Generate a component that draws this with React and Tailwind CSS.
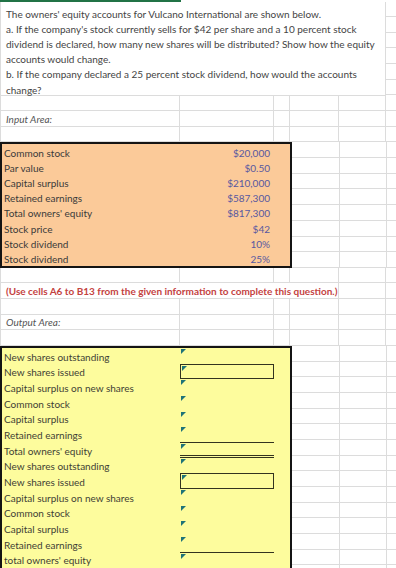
import React from 'react';

const inputs = [
  ['Common stock', '$20,000'],
  ['Par value', '$0.50'],
  ['Capital surplus', '$210,000'],
  ['Retained earnings', '$587,300'],
  ["Total owners' equity", '$817,300'],
  ['Stock price', '$42'],
  ['Stock dividend', '10%'],
  ['Stock dividend', '25%'],
];

// mark: box = boxed answer cell, top = single rule above, total = rule above + double rule below
const outputs = [
  ['New shares outstanding', ''],
  ['New shares issued', 'box'],
  ['Capital surplus on new shares', ''],
  ['Common stock', ''],
  ['Capital surplus', ''],
  ['Retained earnings', ''],
  ["Total owners' equity", 'total'],
  ['New shares outstanding', ''],
  ['New shares issued', 'box'],
  ['Capital surplus on new shares', ''],
  ['Common stock', ''],
  ['Capital surplus', ''],
  ['Retained earnings', ''],
  ["total owners' equity", 'top'],
  ['', 'none'],
];

const intro = [
  "The owners' equity accounts for Vulcano International are shown below.",
  "a. If the company's stock currently sells for $42 per share and a 10 percent stock",
  'dividend is declared, how many new shares will be distributed? Show how the equity',
  'accounts would change.',
  'b. If the company declared a 25 percent stock dividend, how would the accounts',
  'change?',
];

function RightCells({ wide = false }) {
  return (
    <>
      <div className={`${wide ? 'w-[49px]' : 'w-[48px]'} shrink-0 border-r border-b border-[#dcdcdc]`} />
      <div className="w-[47px] shrink-0 border-r border-b border-[#dcdcdc]" />
      <div className="flex-1 border-b border-[#dcdcdc]" />
    </>
  );
}

function GridRow({ children, italic = false }) {
  return (
    <div className="flex h-[15.67px]">
      <div
        className={`w-[180px] shrink-0 border-l border-r border-b border-[#dcdcdc] flex items-end pl-[5px] pb-[1px] leading-[12px] text-[#555] ${
          italic ? 'italic' : ''
        }`}
      >
        {children}
      </div>
      <div className="w-[94px] shrink-0 border-r border-b border-[#dcdcdc]" />
      <div className="w-[16px] shrink-0 border-r border-b border-[#dcdcdc]" />
      <RightCells wide />
    </div>
  );
}

function Flag() {
  return (
    <span className="absolute top-[1px] left-[1px] w-0 h-0 border-t-[5px] border-r-[5px] border-t-[#1e7378] border-r-transparent" />
  );
}

export default function App() {
  return (
    <div className="w-[396px] h-[568px] overflow-hidden bg-white font-['Lato',sans-serif] text-[10px]">
      <div className="flex h-[1.5px]">
        <div className="w-[181px] bg-[#217346]" />
      </div>

      <div className="flex h-[94px]">
        <div className="w-[386px] shrink-0 border-l border-r border-b border-[#dcdcdc] pl-[5px] pt-[5px] leading-[15.2px] text-[#444]">
          {intro.map((line, i) => (
            <div key={i} className="whitespace-nowrap">
              {line}
            </div>
          ))}
        </div>
        <div className="flex-1 flex flex-col">
          {[0, 1, 2, 3, 4, 5].map((i) => (
            <div key={i} className="h-[15.67px] border-b border-[#dcdcdc]" />
          ))}
        </div>
      </div>

      <GridRow />
      <GridRow italic>Input Area:</GridRow>
      <GridRow />

      <div className="flex h-[125.36px]">
        <div className="w-[292px] shrink-0 border-2 border-[#141414] bg-[#fbca99] flex flex-col">
          {inputs.map(([label, value], i) => (
            <div key={i} className="flex-1 flex items-end pb-[1px] leading-[12px]">
              <div className="w-[178px] shrink-0 pl-[2px] text-[#3a3a3a] whitespace-nowrap">{label}</div>
              <div className="w-[94px] shrink-0 pr-[4px] text-right text-[#5858a0]">{value}</div>
            </div>
          ))}
        </div>
        <div className="flex-1 flex flex-col">
          {inputs.map((_, i) => (
            <div key={i} className="flex-1 flex">
              <RightCells />
            </div>
          ))}
        </div>
      </div>

      <GridRow />
      <div className="flex h-[15.67px]">
        <div className="w-[339px] shrink-0 border-l border-r border-b border-[#dcdcdc] flex items-end pl-[5px] pb-[1px] leading-[12px] font-bold text-[#c4423f] whitespace-nowrap">
          (Use cells A6 to B13 from the given information to complete this question.)
        </div>
        <div className="w-[47px] shrink-0 border-r border-b border-[#dcdcdc]" />
        <div className="flex-1 border-b border-[#dcdcdc]" />
      </div>
      <GridRow />
      <GridRow italic>Output Area:</GridRow>
      <GridRow />

      <div className="flex">
        <div className="w-[292px] shrink-0 border-t-2 border-l-2 border-r-2 border-[#141414] bg-[#fdfc9d] flex flex-col">
          {outputs.map(([label, mark], i) => (
            <div key={i} className="h-[15.67px] flex">
              <div className="w-[178px] shrink-0 flex items-end pl-[2px] pb-[1px] leading-[12px] text-[#3f3f35] whitespace-nowrap">
                {label}
              </div>
              <div
                className={`relative w-[94px] shrink-0 ${
                  mark === 'box'
                    ? 'border-[1.5px] border-[#33331f]'
                    : mark === 'total'
                    ? 'border-t border-b-[3px] border-double border-[#33331f]'
                    : mark === 'top'
                    ? 'border-t border-[#33331f]'
                    : ''
                }`}
              >
                {mark !== 'none' && <Flag />}
              </div>
            </div>
          ))}
        </div>
        <div className="flex-1 flex flex-col">
          {outputs.map((_, i) => (
            <div key={i} className="h-[15.67px] flex">
              <RightCells />
            </div>
          ))}
        </div>
      </div>
    </div>
  );
}
